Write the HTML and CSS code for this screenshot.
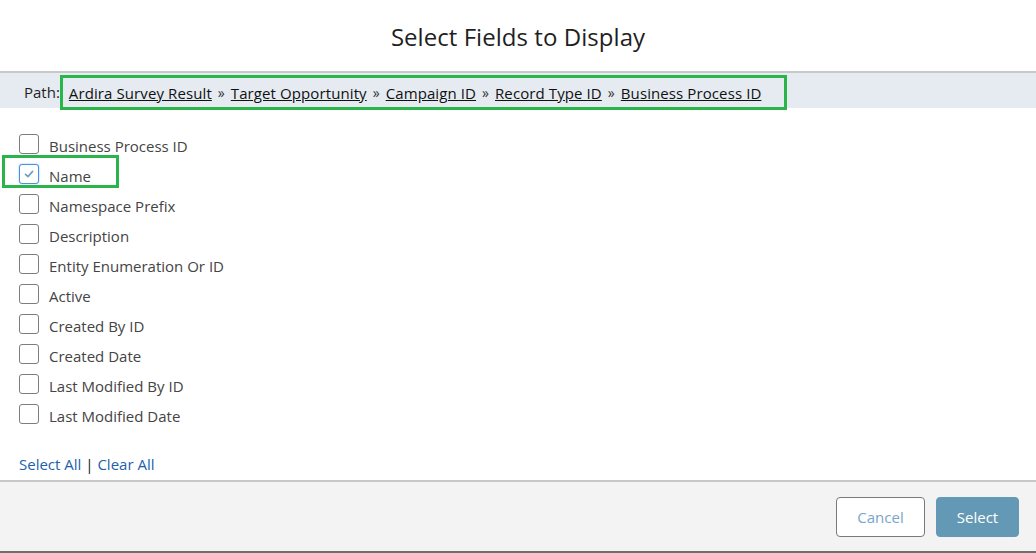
FILE: index.html
```html
<!DOCTYPE html>
<html>
<head>
<meta charset="utf-8">
<link rel="stylesheet" href="styles.css">
</head>
<body>
<div class="modal">
  <header class="modal-header">
    <h1 class="title">Select Fields to Display</h1>
  </header>
  <div class="path-bar">
    <span class="path-label">Path:</span>
    <span class="path-links highlight">
      <a href="#">Ardira Survey Result</a><span class="sep">»</span><a href="#">Target Opportunity</a><span class="sep">»</span><a href="#">Campaign ID</a><span class="sep">»</span><a href="#">Record Type ID</a><span class="sep">»</span><a href="#">Business Process ID</a>
    </span>
  </div>
  <main class="body">
    <ul class="field-list">
      <li class="field"><span class="box"></span><span class="label">Business Process ID</span></li>
      <li class="field marked"><span class="box checked"><svg viewBox="0 0 12 12" width="12" height="12"><path d="M2.5 6.3 L5 8.6 L9.6 3.4" fill="none" stroke="#6f9ec2" stroke-width="1.6" stroke-linecap="round" stroke-linejoin="round"/></svg></span><span class="label">Name</span></li>
      <li class="field"><span class="box"></span><span class="label">Namespace Prefix</span></li>
      <li class="field"><span class="box"></span><span class="label">Description</span></li>
      <li class="field"><span class="box"></span><span class="label">Entity Enumeration Or ID</span></li>
      <li class="field"><span class="box"></span><span class="label">Active</span></li>
      <li class="field"><span class="box"></span><span class="label">Created By ID</span></li>
      <li class="field"><span class="box"></span><span class="label">Created Date</span></li>
      <li class="field"><span class="box"></span><span class="label">Last Modified By ID</span></li>
      <li class="field"><span class="box"></span><span class="label">Last Modified Date</span></li>
    </ul>
    <div class="bulk"><a href="#">Select All</a> | <a href="#">Clear All</a></div>
  </main>
  <footer class="modal-footer">
    <button class="btn btn-cancel">Cancel</button>
    <button class="btn btn-select">Select</button>
  </footer>
</div>
</body>
</html>
```
FILE: styles.css
```css
*, *::before, *::after { box-sizing: border-box; }
html, body { margin: 0; padding: 0; }
body {
  width: 1036px;
  height: 553px;
  background: #fff;
  font-family: "Open Sans", "Noto Sans", "Liberation Sans", sans-serif;
  color: #333;
  overflow: hidden;
}
.modal {
  display: flex;
  flex-direction: column;
  height: 553px;
}
.modal-header {
  height: 73px;
  border-bottom: 2px solid #c8c8c8;
  display: flex;
  align-items: center;
  justify-content: center;
  padding-top: 2px;
}
.title {
  margin: 0;
  font-size: 24px;
  font-weight: 400;
  color: #1f1f1f;
  letter-spacing: 0.05px;
}
.path-bar {
  height: 35px;
  background: #e5ebf1;
  display: flex;
  align-items: flex-start;
  padding-left: 24px;
  padding-top: 2px;
  font-size: 15px;
  color: #1f1f1f;
}
.path-label {
  line-height: 35px;
  margin-right: 0;
}
.path-links {
  height: 35px;
  display: flex;
  align-items: center;
  padding: 0 23px 0 6px;
}
.highlight { border: 3px solid #2ab54a; }
.path-links a {
  color: #111;
  text-decoration: underline;
  letter-spacing: 0.1px;
}
.sep { margin: 0 6px; color: #333; font-size: 14px; }
.body {
  flex: 1;
  padding: 23px 0 0 19px;
}
.field-list {
  list-style: none;
  margin: 0;
  padding: 0;
}
.field {
  height: 30px;
  display: flex;
  align-items: center;
  position: relative;
  font-size: 15px;
  color: #444;
}
.field.marked::after {
  content: "";
  position: absolute;
  left: -17px;
  top: -6px;
  width: 117px;
  height: 33px;
  border: 3px solid #2ab54a;
}
.box {
  width: 20px;
  height: 20px;
  border: 1px solid #7d7d7d;
  border-radius: 3px;
  margin-right: 10px;
  margin-top: -4px;
  display: flex;
  align-items: center;
  justify-content: center;
  background: #fff;
}
.box.checked {
  border-color: #4a90e2;
  box-shadow: 0 0 2px #8fbef0;
}
.bulk {
  margin-top: 23px;
  font-size: 15px;
  color: #111;
}
.bulk a { color: #1b62ad; text-decoration: none; }
.modal-footer {
  height: 73px;
  background: #f3f3f3;
  border-top: 2px solid #c8c8c8;
  border-bottom: 2px solid #6e6e6e;
  display: flex;
  align-items: center;
  justify-content: flex-end;
  gap: 11px;
  padding-right: 17px;
}
.btn {
  height: 40px;
  font-family: inherit;
  font-size: 15px;
  border-radius: 4px;
  cursor: pointer;
}
.btn-cancel {
  width: 89px;
  background: #fff;
  border: 1px solid #7a7a7a;
  color: #7aa6c6;
}
.btn-select {
  width: 83px;
  background: #6399b4;
  border: 1px solid #6399b4;
  color: #fff;
}
```
